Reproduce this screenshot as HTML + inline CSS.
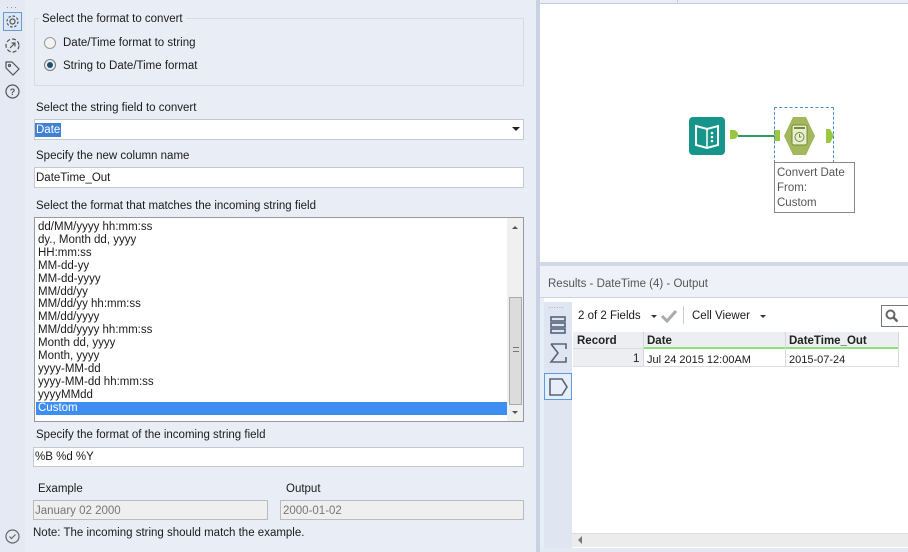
<!DOCTYPE html>
<html><head><style>
*{box-sizing:border-box;margin:0;padding:0}
body{width:908px;height:552px;overflow:hidden;background:#e9edf6;font-family:"Liberation Sans",sans-serif;font-size:11.5px;color:#1b1b1b;position:relative}
.a{position:absolute;white-space:nowrap}
.box{position:absolute;background:#fff;border:1px solid #c4c8d0}
.lbl{line-height:14px;margin-top:1px}
</style></head><body>
<div class="a" style="left:0;top:0;width:536px;height:552px;background:#e9edf6"></div>
<div class="a" style="left:0;top:0;width:25px;height:552px;background:#e4e9f4"></div>
<div class="a" style="left:6px;top:2px;color:#888;font-size:9px;letter-spacing:1px">···</div>
<div class="a" style="left:3px;top:12px;width:19px;height:19px;border:1px solid #6a9ad6;background:#dce7f6"></div>
<svg class="a" style="left:3px;top:12px" width="19" height="19" viewBox="0 0 19 19" fill="none" stroke="#555" stroke-width="1.2"><circle cx="9.5" cy="9.5" r="2.5"/><circle cx="9.5" cy="9.5" r="5.5" stroke-dasharray="2.5 1.8"/></svg>
<svg class="a" style="left:3px;top:36px" width="19" height="19" viewBox="0 0 19 19" fill="none" stroke="#555" stroke-width="1.2"><circle cx="9.5" cy="9.5" r="6.5" stroke-dasharray="4 2"/><path d="M7 12l5-5M8.5 7H12v3.5"/></svg>
<svg class="a" style="left:3px;top:59px" width="19" height="19" viewBox="0 0 19 19" fill="none" stroke="#555" stroke-width="1.2"><path d="M3 3h6l7 7-6 6-7-7z"/><circle cx="6.5" cy="6.5" r="1"/></svg>
<svg class="a" style="left:3px;top:82px" width="19" height="19" viewBox="0 0 19 19" fill="none" stroke="#555" stroke-width="1.2"><circle cx="9.5" cy="9.5" r="6.5"/><text x="9.5" y="13" font-size="9" text-anchor="middle" fill="#555" stroke="none" font-family="Liberation Sans" font-weight="bold">?</text></svg>
<svg class="a" style="left:3px;top:527px" width="19" height="19" viewBox="0 0 19 19" fill="none" stroke="#666" stroke-width="1.2"><circle cx="9.5" cy="9.5" r="6.5"/><path d="M6.5 9.5l2 2 4-4"/></svg>

<div class="a" style="left:34px;top:18px;width:490px;height:68px;border:1px solid #d5dae3;border-radius:2px"></div>
<div class="a lbl" style="left:39px;top:11px;background:#e9edf6;padding:0 3px">Select the format to convert</div>
<div class="a" style="left:44px;top:37px;width:12px;height:12px;border-radius:50%;border:1px solid #999;background:#f3f3f3"></div>
<div class="a lbl" style="left:63px;top:35px">Date/Time format to string</div>
<div class="a" style="left:44px;top:59px;width:12px;height:12px;border-radius:50%;border:1px solid #777;background:#eee"><div style="margin:2px;width:6px;height:6px;border-radius:50%;background:#1d4f73"></div></div>
<div class="a lbl" style="left:63px;top:58px">String to Date/Time format</div>

<div class="a lbl" style="left:36px;top:100px">Select the string field to convert</div>
<div class="box" style="left:34px;top:119px;width:490px;height:21px"></div>
<div class="a" style="left:35px;top:122px;background:#3f81d4;color:#fff;padding:0 1px;line-height:14px;margin-top:1px">Date</div>
<div class="a" style="left:512px;top:127px;border-left:4px solid transparent;border-right:4px solid transparent;border-top:4px solid #222"></div>

<div class="a lbl" style="left:36px;top:148px">Specify the new column name</div>
<div class="box" style="left:34px;top:167px;width:490px;height:21px"></div>
<div class="a lbl" style="left:36px;top:170px">DateTime_Out</div>

<div class="a lbl" style="left:36px;top:198px">Select the format that matches the incoming string field</div>
<div class="box" style="left:34px;top:217px;width:490px;height:205px;border-color:#999;overflow:hidden">
<div style="position:absolute;left:1px;top:3px;width:471px;line-height:12.9px">
<div style="padding-left:2px">dd/MM/yyyy hh:mm:ss</div><div style="padding-left:2px">dy., Month dd, yyyy</div><div style="padding-left:2px">HH:mm:ss</div><div style="padding-left:2px">MM-dd-yy</div><div style="padding-left:2px">MM-dd-yyyy</div><div style="padding-left:2px">MM/dd/yy</div><div style="padding-left:2px">MM/dd/yy hh:mm:ss</div><div style="padding-left:2px">MM/dd/yyyy</div><div style="padding-left:2px">MM/dd/yyyy hh:mm:ss</div><div style="padding-left:2px">Month dd, yyyy</div><div style="padding-left:2px">Month, yyyy</div><div style="padding-left:2px">yyyy-MM-dd</div><div style="padding-left:2px">yyyy-MM-dd hh:mm:ss</div><div style="padding-left:2px">yyyyMMdd</div><div style="background:#3d8ef0;color:#fff;padding-left:2px">Custom</div>
</div>
<div style="position:absolute;left:472px;top:0;width:17px;height:203px;background:#f0f0f0"></div>
<div style="position:absolute;left:474px;top:79px;width:13px;height:108px;background:#dcdcdc;border:1px solid #aaa"></div>
<div style="position:absolute;left:477px;top:8px;border-left:3px solid transparent;border-right:3px solid transparent;border-bottom:3px solid #555"></div>
<div style="position:absolute;left:477px;top:193px;border-left:3px solid transparent;border-right:3px solid transparent;border-top:3px solid #555"></div>
<div style="position:absolute;left:478px;top:129px;width:6px;height:5px;border-top:1px solid #777;border-bottom:1px solid #777"></div>
</div>

<div class="a lbl" style="left:36px;top:427px">Specify the format of the incoming string field</div>
<div class="box" style="left:33px;top:447px;width:491px;height:20px"></div>
<div class="a lbl" style="left:35px;top:449px">%B %d %Y</div>
<div class="a lbl" style="left:38px;top:481px">Example</div>
<div class="a lbl" style="left:286px;top:481px">Output</div>
<div class="a" style="left:33px;top:500px;width:235px;height:20px;background:#efefef;border:1px solid #bbb"></div>
<div class="a lbl" style="left:35px;top:503px;color:#777">January 02 2000</div>
<div class="a" style="left:280px;top:500px;width:244px;height:20px;background:#efefef;border:1px solid #bbb"></div>
<div class="a lbl" style="left:283px;top:503px;color:#777">2000-01-02</div>
<div class="a lbl" style="left:33px;top:525px">Note: The incoming string should match the example.</div>

<div class="a" style="left:536px;top:0;width:4px;height:552px;background:#c9d2e2"></div>

<div class="a" style="left:540px;top:0;width:368px;height:262px;background:#fff"></div>
<div class="a" style="left:540px;top:0;width:368px;height:4px;background:#e9edf6;border-bottom:1px solid #c6ccd8"></div>
<div class="a" style="left:677px;top:0;width:1px;height:4px;background:#c6ccd8"></div>
<svg class="a" style="left:688px;top:115px" width="150" height="45" viewBox="0 0 150 45">
<rect x="1" y="2" width="36" height="38" rx="4" fill="#16958a"/>
<path d="M8 11l11 3 11-3v19l-11 3-11-3z" fill="none" stroke="#fff" stroke-width="2"/>
<path d="M19 14v19" stroke="#fff" stroke-width="1.5"/>
<circle cx="24" cy="18" r="1.3" fill="#fff"/><circle cx="24" cy="22" r="1.3" fill="#fff"/><circle cx="24" cy="26" r="1.3" fill="#fff"/>
<path d="M42 15h5l3 3v3l-3 3h-5z" fill="#9bc640"/>
<path d="M50 21h37" stroke="#2a9e60" stroke-width="2"/>
<rect x="86" y="15" width="6" height="11" fill="#9bc640"/>
<path d="M105 2l13 0 9 19-9 19h-13l-9-19z" fill="#a3b85a"/>
<rect x="104" y="10" width="15" height="20" rx="2" fill="#e8efd0" stroke="#7a8a3a"/>
<rect x="106" y="12" width="11" height="2" fill="#7a8a3a"/>
<circle cx="111.5" cy="22" r="4.5" fill="none" stroke="#7a8a3a"/>
<path d="M111.5 19v3h2" fill="none" stroke="#7a8a3a"/>
<path d="M138 14h4l4 7-4 7h-4z" fill="#9bc640"/>
</svg>
<div class="a" style="left:774px;top:107px;width:60px;height:56px;border:1px dashed #4c8fcf"></div>
<div class="a" style="left:774px;top:162px;width:81px;height:51px;background:#fff;border:1px solid #888;padding:3px 2px 0;line-height:15px;color:#555;font-size:11.5px;white-space:normal">Convert Date<br>From:<br>Custom</div>

<div class="a" style="left:540px;top:262px;width:368px;height:4px;background:#d2d9e6"></div>
<div class="a" style="left:540px;top:266px;width:368px;height:32px;background:#eef1f7;border-bottom:1px solid #cfd5e0"></div>
<div class="a lbl" style="left:548px;top:276px;color:#555">Results - DateTime (4) - Output</div>
<div class="a" style="left:540px;top:298px;width:368px;height:254px;background:#fff"></div>
<div class="a" style="left:540px;top:298px;width:4px;height:254px;background:#e9edf6"></div>
<div class="a" style="left:544px;top:302px;width:28px;height:246px;background:#dfe5f1"></div>
<div class="a" style="left:548px;top:303px;color:#999;font-size:8px;letter-spacing:0">······</div>
<svg class="a" style="left:547px;top:313px" width="22" height="24" viewBox="0 0 22 24" fill="none" stroke="#56657a" stroke-width="1.6"><rect x="4" y="4" width="14" height="4"/><rect x="4" y="10" width="14" height="4"/><rect x="4" y="16" width="14" height="4"/></svg>
<svg class="a" style="left:547px;top:341px" width="22" height="24" viewBox="0 0 22 24" fill="none" stroke="#56657a" stroke-width="1.6"><path d="M4 3h15v5M4 3l7 9-7 9h15v-5"/></svg>
<div class="a" style="left:544px;top:373px;width:28px;height:27px;border:1px solid #5d9be0;background:#e8eef8"></div>
<svg class="a" style="left:547px;top:375px" width="22" height="24" viewBox="0 0 22 24" fill="none" stroke="#56657a" stroke-width="1.6"><path d="M3 4h12l5 8-5 8H3z"/></svg>
<div class="a lbl" style="left:578px;top:308px">2 of 2 Fields</div>
<div class="a" style="left:651px;top:315px;border-left:3px solid transparent;border-right:3px solid transparent;border-top:3px solid #333"></div>
<svg class="a" style="left:660px;top:309px" width="18" height="14" viewBox="0 0 18 14"><path d="M2 7l5 5 9-10" fill="none" stroke="#aaa" stroke-width="3"/></svg>
<div class="a" style="left:683px;top:306px;width:1px;height:18px;background:#ccc"></div>
<div class="a lbl" style="left:692px;top:308px">Cell Viewer</div>
<div class="a" style="left:760px;top:315px;border-left:3px solid transparent;border-right:3px solid transparent;border-top:3px solid #333"></div>
<div class="a" style="left:881px;top:305px;width:30px;height:22px;border:1px solid #777;background:#fff"></div>
<svg class="a" style="left:884px;top:308px" width="16" height="16" viewBox="0 0 16 16"><circle cx="6.5" cy="6.5" r="4" fill="none" stroke="#666" stroke-width="2"/><path d="M9.5 9.5l4 4" stroke="#666" stroke-width="2.5"/></svg>
<div class="a" style="left:573px;top:332px;width:325px;height:17px;background:#eceef2;border-bottom:1px solid #ddd"></div>
<div class="a" style="left:643px;top:347px;width:255px;height:2px;background:#8de07a"></div>
<div class="a" style="left:643px;top:332px;width:1px;height:35px;background:#d8d8d8"></div>
<div class="a" style="left:785px;top:332px;width:1px;height:35px;background:#d8d8d8"></div>
<div class="a" style="left:898px;top:332px;width:1px;height:35px;background:#d8d8d8"></div>
<div class="a lbl" style="left:577px;top:333px;font-weight:bold;color:#222">Record</div>
<div class="a lbl" style="left:647px;top:333px;font-weight:bold;color:#222">Date</div>
<div class="a lbl" style="left:789px;top:333px;font-weight:bold;color:#222">DateTime_Out</div>
<div class="a" style="left:573px;top:349px;width:70px;height:18px;background:#eceef2"></div>
<div class="a" style="left:573px;top:366px;width:325px;height:1px;background:#ddd"></div>
<div class="a lbl" style="left:633px;top:351px">1</div>
<div class="a lbl" style="left:647px;top:352px;font-size:11px">Jul 24 2015 12:00AM</div>
<div class="a lbl" style="left:789px;top:352px;font-size:11px">2015-07-24</div>
<div class="a" style="left:572px;top:533px;width:336px;height:14px;background:#ececec;border-top:1px solid #ddd"></div>
<div class="a" style="left:578px;top:536px;border-top:4px solid transparent;border-bottom:4px solid transparent;border-right:4px solid #777"></div>
<div class="a" style="left:540px;top:548px;width:368px;height:4px;background:#e4e9f2"></div>
</body></html>
